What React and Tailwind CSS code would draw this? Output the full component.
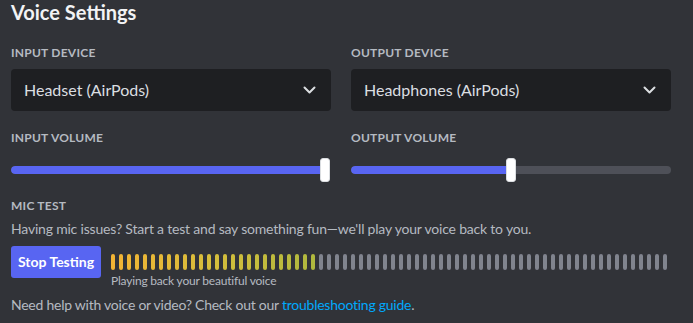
import React from "react";

const font = { fontFamily: 'Lato, "Noto Sans", sans-serif' };

function Chevron() {
  return (
    <svg width="13" height="8" viewBox="0 0 13 8" fill="none" className="shrink-0">
      <path d="M1.5 1.5 L6.5 6.5 L11.5 1.5" stroke="#dbdee1" strokeWidth="2" strokeLinecap="round" strokeLinejoin="round" />
    </svg>
  );
}

function Select({ value }) {
  return (
    <div className="h-[42px] rounded-[4px] bg-[#1e1f22] flex items-center justify-between pl-[13px] pr-[15px]">
      <span className="text-[16px] text-[#dbdee1] leading-5">{value}</span>
      <Chevron />
    </div>
  );
}

function Label({ children, className = "" }) {
  return (
    <div className={"text-[12px] leading-4 font-bold uppercase tracking-[0.02em] text-[#b5bac1] " + className}>
      {children}
    </div>
  );
}

function Slider({ pct }) {
  return (
    <div className="relative h-6 flex items-center">
      <div className="w-full h-2 rounded-full bg-[#4e5058] overflow-hidden">
        <div className="h-full bg-[#5865f2] rounded-full" style={{ width: pct + "%" }} />
      </div>
      <div
        className="absolute top-0 w-[10px] h-6 rounded-[3px] bg-white border border-[#dbdee1]"
        style={{ left: `calc(${pct}% - 5px)` }}
      />
    </div>
  );
}

function lerp(a, b, t) {
  return Math.round(a + (b - a) * t);
}

function barColor(i, lit) {
  if (i >= lit) return "#80848e";
  const t = i / (lit - 1);
  let c;
  if (t < 0.5) {
    const u = t / 0.5;
    c = [lerp(242, 214, u), lerp(180, 190, u), lerp(52, 60, u)];
  } else {
    const u = (t - 0.5) / 0.5;
    c = [lerp(214, 176, u), lerp(190, 185, u), lerp(60, 62, u)];
  }
  return `rgb(${c[0]},${c[1]},${c[2]})`;
}

export default function App() {
  const bars = Array.from({ length: 70 }, (_, i) => i);
  return (
    <div className="w-[693px] h-[323px] bg-[#313338] overflow-hidden px-[11px]" style={font}>
      <div className="w-[660px]">
        <div className="text-[20px] leading-6 font-bold text-[#f2f3f5]">Voice Settings</div>

        <div className="grid grid-cols-2 gap-x-5 mt-[21px]">
          <div>
            <Label>Input Device</Label>
            <div className="mt-2">
              <Select value="Headset (AirPods)" />
            </div>
            <Label className="mt-[19px]">Input Volume</Label>
            <div className="mt-3 pr-[6px]">
              <Slider pct={100} />
            </div>
          </div>
          <div>
            <Label>Output Device</Label>
            <div className="mt-2">
              <Select value="Headphones (AirPods)" />
            </div>
            <Label className="mt-[19px]">Output Volume</Label>
            <div className="mt-3">
              <Slider pct={50} />
            </div>
          </div>
        </div>

        <Label className="mt-4">Mic Test</Label>
        <div className="mt-[5px] text-[14px] leading-[20px] tracking-[-0.2px] text-[#b5bac1]">
          Having mic issues? Start a test and say something fun—we'll play your voice back to you.
        </div>

        <div className="flex mt-[7px]">
          <button className="w-[90px] h-8 rounded-[3px] bg-[#5865f2] text-white text-[14px] font-bold leading-4 shrink-0">
            Stop Testing
          </button>
          <div className="ml-[10px] pt-2">
            <div className="flex gap-1">
              {bars.map((i) => (
                <div key={i} className="w-1 h-4 rounded-full" style={{ backgroundColor: barColor(i, 26) }} />
              ))}
            </div>
            <div className="mt-[3px] text-[12px] leading-4 tracking-[-0.2px] text-[#b5bac1]">Playing back your beautiful voice</div>
          </div>
        </div>

        <div className="mt-[6px] text-[14px] leading-5 tracking-[-0.25px] text-[#b5bac1]">
          Need help with voice or video? Check out our{" "}
          <span className="text-[#00a8fc]">troubleshooting guide</span>.
        </div>
      </div>
    </div>
  );
}
